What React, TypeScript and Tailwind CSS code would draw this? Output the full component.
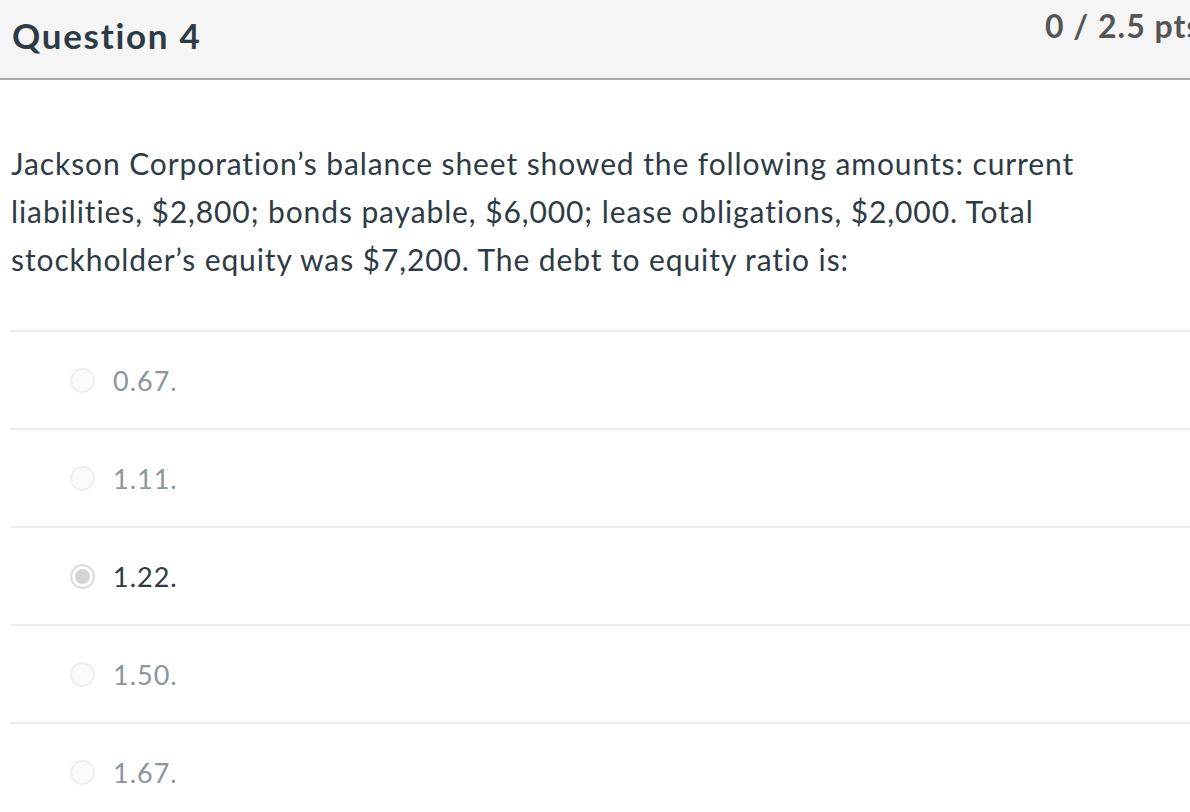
const answers = [
  { label: '0.67.', selected: false },
  { label: '1.11.', selected: false },
  { label: '1.22.', selected: true },
  { label: '1.50.', selected: false },
  { label: '1.67.', selected: false },
];

export default function App() {
  return (
    <div className="w-[1190px] h-[812px] overflow-hidden bg-white font-['Lato','Liberation_Sans',sans-serif]">
      <div className="w-[1230px] h-[80px] bg-[#f5f5f5] border-b-2 border-[#aaaaaa] flex items-center pl-[12px]">
        <h2 className="w-[1033px] shrink-0 text-[35px] tracking-[1.7px] font-bold text-[#2d3b45] leading-none -mt-[8px]">
          Question 4
        </h2>
        <span className="whitespace-nowrap text-[32px] tracking-[1px] font-bold text-[#555555] leading-none -mt-[26px]">
          0 / 2.5 pts
        </span>
      </div>
      <div className="pt-[59px] pl-[11px]">
        <p className="w-[1130px] text-[30px] tracking-[0.9px] leading-[48px] text-[#2d3b45]">
          Jackson Corporation’s balance sheet showed the following amounts: current liabilities, $2,800; bonds payable, $6,000; lease obligations, $2,000. Total stockholder’s equity was $7,200. The debt to equity ratio is:
        </p>
      </div>
      <div className="mt-[47px] ml-[10px]">
        {answers.map((a) => (
          <div key={a.label} className="h-[98px] border-t-2 border-[#eeeeee] flex items-center pl-[60px]">
            <span
              className={
                a.selected
                  ? 'w-[25px] h-[25px] rounded-full border-2 border-[#dddddd] bg-[#d4d4d4] shadow-[inset_0_0_0_3px_#ffffff] shrink-0'
                  : 'w-[25px] h-[25px] rounded-full border-2 border-[#eeeeee] bg-[#fafafa] shrink-0'
              }
            />
            <span
              className={
                'ml-[18px] text-[27px] tracking-[1px] leading-none ' +
                (a.selected ? 'text-[#2d3b45]' : 'text-[#8b969e]')
              }
            >
              {a.label}
            </span>
          </div>
        ))}
      </div>
    </div>
  );
}
